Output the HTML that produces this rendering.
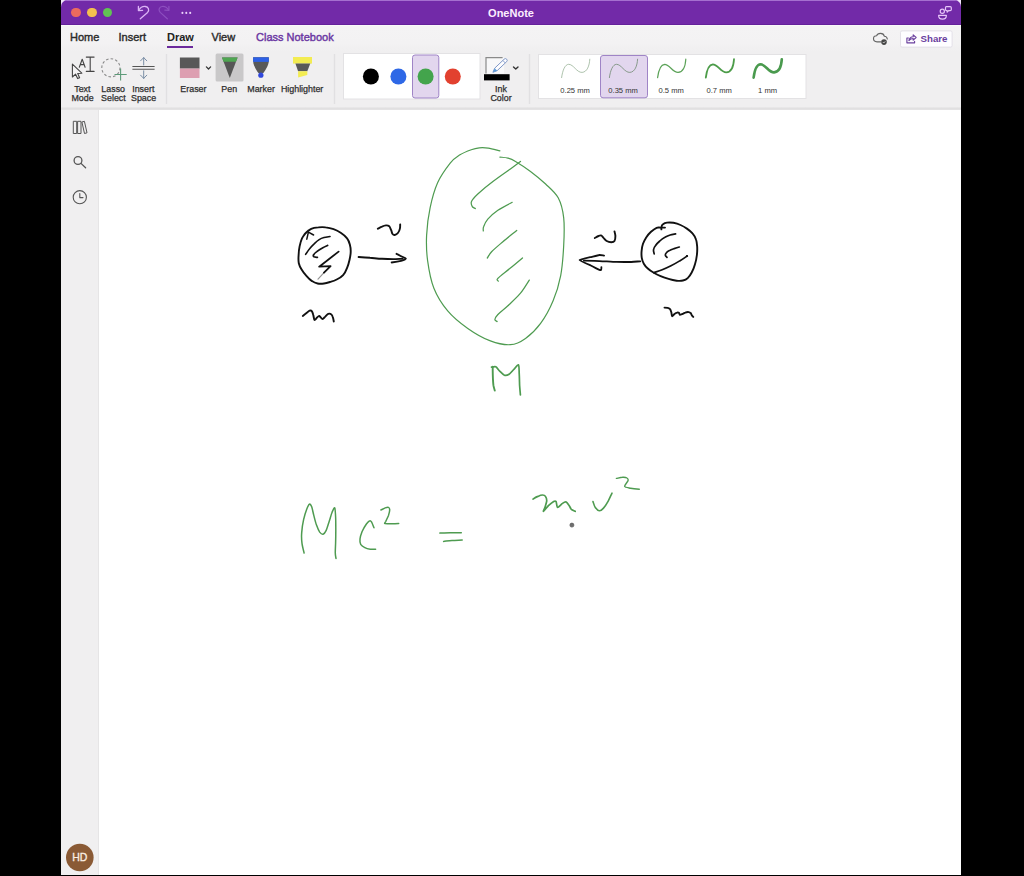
<!DOCTYPE html>
<html><head><meta charset="utf-8"><title>OneNote</title>
<style>
html,body{margin:0;padding:0;background:#000;}
body{width:1024px;height:876px;position:relative;overflow:hidden;font-family:"Liberation Sans",sans-serif;}
#win{position:absolute;left:61px;top:0;width:900px;height:875px;background:#fff;border-radius:6.5px 6.5px 0 0;overflow:hidden;}
#title{position:absolute;left:0;top:0;width:900px;height:25px;background:#722aa8;border-top:1px solid #a56fd0;border-bottom:1px solid #64219a;box-sizing:border-box;}
#title .t{position:absolute;left:0;width:900px;top:6px;text-align:center;color:#fdeeff;font-weight:bold;font-size:11px;line-height:13px;}
.tl{position:absolute;top:6.8px;width:9.6px;height:9.6px;border-radius:50%;}
#tabs{position:absolute;left:0;top:25px;width:900px;height:26px;background:linear-gradient(#fbfafb 0,#f4f3f4 1.5px,#f3f2f3 18px,#f0eff0 26px);}
.tab{position:absolute;top:5px;font-size:11px;line-height:14px;color:#2b2b2b;-webkit-text-stroke:0.4px #2b2b2b;white-space:nowrap;}
#ribbon{position:absolute;left:0;top:51px;width:900px;height:57px;background:#f0eff0;}
#rline{position:absolute;left:0;top:107px;width:900px;height:3px;background:linear-gradient(#ebeaeb,#e0dfe0 55%,#e6e5e6);}
.lbl{position:absolute;font-size:8.5px;line-height:9.7px;color:#2e2e2e;text-align:center;white-space:nowrap;-webkit-text-stroke:0.2px #2e2e2e;transform:translateX(-50%);}
#side{position:absolute;left:0;top:110px;width:38px;height:765px;background:#f0eff0;border-right:1px solid #e6e5e6;box-sizing:border-box;}
#canvas{position:absolute;left:38px;top:110px;width:862px;height:765px;background:#fff;}
svg{position:absolute;left:0;top:0;overflow:visible;}
</style></head>
<body>
<div style="position:absolute;left:61px;top:0;width:900px;height:10px;background:#f1e6fa;"></div>
<div id="win">
  <div id="title">
    <div class="tl" style="left:10.4px;background:#ec6a5e;"></div>
    <div class="tl" style="left:26.1px;background:#f4bf4f;"></div>
    <div class="tl" style="left:41.8px;background:#61c454;"></div>
    <div class="t">OneNote</div>
  </div>
  <div id="tabs">
    <div class="tab" style="left:9px;">Home</div>
    <div class="tab" style="left:57.5px;">Insert</div>
    <div class="tab" style="left:106px;font-weight:bold;-webkit-text-stroke:0;color:#222;">Draw</div>
    <div style="position:absolute;left:106px;top:20.5px;width:26px;height:2px;background:#6b2a9c;"></div>
    <div class="tab" style="left:150.5px;">View</div>
    <div class="tab" style="left:195px;color:#6a36a2;-webkit-text-stroke:0.4px #6a36a2;">Class Notebook</div>
  </div>
  <div id="ribbon"></div>
  <div id="rline"></div>
  <div id="side"></div>
  <div id="canvas"></div>
</div>
<!-- full-page overlay SVG in absolute page coordinates -->
<svg id="ui" width="1024" height="876" viewBox="0 0 1024 876">
<!-- title bar icons -->
<g fill="none" stroke="#dcb4f6" stroke-width="1.3" stroke-linecap="round" stroke-linejoin="round">
  <path d="M138.4 6.4 L138.4 10.6 L142.6 10.3"/>
  <path d="M138.8 10.2 C140.5 7.4 143.2 6.3 145.3 6.5 C148.6 6.9 149.6 10.2 147.6 12.4 L140.3 18.8"/>
</g>
<g fill="none" stroke="#9256c4" stroke-width="1.2" stroke-linecap="round" stroke-linejoin="round" opacity="0.85">
  <path d="M168.9 6.4 L168.9 10.4 L164.8 10.1"/>
  <path d="M168.5 10 C166.9 7.3 164.2 6.3 162.2 6.5 C159 6.9 158.2 10.2 160.2 12.4 L167.3 18.8"/>
</g>
<g fill="#ead2fa"><circle cx="182.4" cy="12.9" r="1.05"/><circle cx="186.3" cy="12.9" r="1.05"/><circle cx="190.2" cy="12.9" r="1.05"/></g>
<!-- feedback icon -->
<g fill="none" stroke="#e6c4f8" stroke-width="1.2" stroke-linejoin="round">
  <circle cx="942.3" cy="11.2" r="2.1"/>
  <path d="M938.6 15.3 H946.4 C946.4 18 944.6 19.2 942.5 19.2 C940.4 19.2 938.6 18 938.6 15.3 Z"/>
  <path d="M946.3 6.6 H950.2 Q951.3 6.6 951.3 7.7 V9.6 Q951.3 10.7 950.2 10.7 H948.6 L947.2 12.2 V10.7 H946.6 Q945.5 10.7 945.5 9.6 V7.7 Q945.5 6.6 946.3 6.6 Z"/>
</g>
<!-- cloud -->
<g fill="none" stroke="#646464" stroke-width="1.15" stroke-linejoin="round" stroke-linecap="round">
  <path d="M880.8 41.8 H877 C874.8 41.8 873.5 40.3 873.5 38.6 C873.5 36.9 874.9 35.7 876.7 35.7 C877.2 34.1 878.8 33.3 880.5 33.3 C882.5 33.3 884 34.6 884.4 36.3 C885.9 36.4 887.1 37.5 887.3 39"/>
</g>
<circle cx="884" cy="42.1" r="2.8" fill="#474747"/>
<path d="M882.8 42 L883.8 43 L885.3 41.3" fill="none" stroke="#e6e6e6" stroke-width="0.75"/>
<!-- share button -->
<rect x="900.5" y="30.9" width="51.6" height="16.2" rx="1.5" fill="#fefdff" stroke="#e3e0e8" stroke-width="1"/>
<g fill="none" stroke="#6a3f9e" stroke-width="1.15" stroke-linejoin="round" stroke-linecap="round">
  <path d="M908.4 38 H906.9 V42.8 H914.6 V41.4"/>
  <path d="M908.9 40.6 C909.3 38.2 910.9 36.9 913.2 36.8 V34.8 L916.1 37.5 L913.2 40.2 V38.5 C911.3 38.5 910 39.2 908.9 40.6 Z"/>
</g>
<text x="920.5" y="42.2" font-family="Liberation Sans, sans-serif" font-weight="bold" font-size="9.7" fill="#6a3f9e">Share</text>

<!-- ribbon separators -->
<g stroke="#e1e0e2" stroke-width="1.4">
  <line x1="166.5" y1="54" x2="166.5" y2="104"/>
  <line x1="334.5" y1="54" x2="334.5" y2="104"/>
  <line x1="529.5" y1="54" x2="529.5" y2="104"/>
</g>

<!-- Text Mode icon -->
<g fill="none" stroke="#444" stroke-width="1.1" stroke-linejoin="round" stroke-linecap="round">
  <path d="M72.4 64.2 L72.4 77 L75.6 74.2 L77.6 78.6 L79.6 77.7 L77.7 73.5 L81.8 73.2 Z" fill="#f4f3f4"/>
  <path d="M79.3 67.2 L82.2 59.3 L85.1 67.2 M80.3 64.6 H84.1"/>
  <path d="M86.3 57.1 H94.1 M86.3 71.4 H94.1 M90.2 57.1 V71.4"/>
</g>
<!-- Lasso -->
<circle cx="110.9" cy="67.8" r="9.1" fill="none" stroke="#8a8a8a" stroke-width="1.1" stroke-dasharray="2.6 2.1"/>
<path d="M120.6 68.4 V80.6 M114.5 74.5 H126.7" fill="none" stroke="#5c9a78" stroke-width="1.1"/>
<!-- Insert Space -->
<g fill="none" stroke="#555" stroke-width="1.1">
  <path d="M132.4 66.5 H154.6 M132.4 69.3 H154.6"/>
</g>
<g fill="none" stroke="#7a8ea6" stroke-width="1" stroke-linecap="round" stroke-linejoin="round">
  <path d="M143.7 57.6 V65 M140.6 60.8 L143.7 57.6 L146.8 60.8"/>
  <path d="M143.7 70.8 V78.4 M140.6 75.2 L143.7 78.4 L146.8 75.2"/>
</g>

<!-- Eraser -->
<rect x="179.9" y="57.5" width="19.6" height="11.1" fill="#585858"/>
<rect x="179.9" y="68.6" width="19.6" height="9.4" fill="#dd9fb1"/>
<path d="M206.4 66.9 L208.5 69 L210.6 66.9" fill="none" stroke="#333" stroke-width="1.3" stroke-linecap="round" stroke-linejoin="round"/>
<!-- Pen selected bg -->
<rect x="215.6" y="53.6" width="27.9" height="27.9" rx="1.5" fill="#c9c8c9"/>
<path d="M222 57.5 H237.6 L229.8 78 Z" fill="#565656"/>
<path d="M222 57.5 H237.6 L236 61.7 H223.6 Z" fill="#4ea651"/>
<!-- Marker -->
<path d="M253.1 57.3 H268.8 V61 C268.6 65.5 265.5 70 263.4 73 H258.4 C256.3 70 253.3 65.5 253.1 61 Z" fill="#595959"/>
<path d="M253.1 57.3 H268.8 V61.9 H253.1 Z" fill="#2d60e6"/>
<circle cx="260.85" cy="75.2" r="2.6" fill="#3148dc"/>
<!-- Highlighter -->
<path d="M293 57 H312 V63.6 H293 Z" fill="#f3ec52"/>
<path d="M295.4 63.6 H310.3 L307.3 71.3 H298.1 Z" fill="#595959"/>
<path d="M298.1 71.3 H307.3 V74.9 L298.1 77.5 Z" fill="#f3ec52"/>

<!-- colour palette -->
<rect x="343.5" y="53.5" width="136.5" height="45.5" fill="#fff" stroke="#e3e2e4" stroke-width="1"/>
<rect x="412.5" y="55" width="26.3" height="43" rx="2.5" fill="#e2d6ee" stroke="#9f84c6" stroke-width="1"/>
<circle cx="370.9" cy="76.5" r="8" fill="#000"/>
<circle cx="398.4" cy="76.5" r="8" fill="#2e68e6"/>
<circle cx="425.6" cy="76.5" r="8" fill="#43a44c"/>
<circle cx="452.8" cy="76.5" r="8" fill="#e2412f"/>
<!-- Ink color -->
<rect x="486" y="57.7" width="18" height="16" fill="#f8f8f9"/><path d="M486 73.4 V57.7 H502.6" fill="none" stroke="#8a8a8a" stroke-width="1.2"/>
<g transform="translate(492.9 72.3) rotate(-43.5)">
  <path d="M0 0 L4.2 -1.75 H17.2 Q19 -1.75 19 0 Q19 1.75 17.2 1.75 H4.2 Z" fill="#fdfdff" stroke="#7b93c4" stroke-width="0.9" stroke-linejoin="round"/>
  <path d="M0 0 L4.2 -1.75 V1.75 Z" fill="#5b9bd8"/>
  <path d="M15.4 -1.75 V1.75" stroke="#7b93c4" stroke-width="0.8"/>
</g>
<rect x="484" y="74.2" width="25.6" height="6.2" fill="#000"/>
<path d="M513.5 66.9 L515.75 69 L518 66.9" fill="none" stroke="#333" stroke-width="1.4" stroke-linecap="round" stroke-linejoin="round"/>

<!-- thickness palette -->
<rect x="538.5" y="54.5" width="267.5" height="44" fill="#fff" stroke="#e3e2e4" stroke-width="1"/>
<rect x="600.5" y="55.5" width="47" height="42.3" rx="2.5" fill="#e2d6ee" stroke="#9f84c6" stroke-width="1"/>
<path d="M561.6 77.6 C562.6 70 565.1 64.5 568.6 64.3 C573.6 64.3 576.6 72.6 582.1 72.4 C587.1 72 589.4 66 589.8000000000001 59.2" fill="none" stroke="#8aa888" stroke-width="0.7" stroke-linecap="round" opacity="1"/>
<path d="M609.4 77.6 C610.4 70 612.9 64.5 616.4 64.3 C621.4 64.3 624.4 72.6 629.9 72.4 C634.9 72 637.1999999999999 66 637.6 59.2" fill="none" stroke="#7d927f" stroke-width="0.9" stroke-linecap="round" opacity="1"/>
<path d="M657.6 77.6 C658.6 70 661.1 64.5 664.6 64.3 C669.6 64.3 672.6 72.6 678.1 72.4 C683.1 72 685.4 66 685.8000000000001 59.2" fill="none" stroke="#5ba257" stroke-width="1.2" stroke-linecap="round" opacity="1"/>
<path d="M705.8 77.6 C706.8 70 709.3 64.5 712.8 64.3 C717.8 64.3 720.8 72.6 726.3 72.4 C731.3 72 733.5999999999999 66 734.0 59.2" fill="none" stroke="#4c9c49" stroke-width="1.8" stroke-linecap="round" opacity="1"/>
<path d="M753.6 77.6 C754.6 70 757.1 64.5 760.6 64.3 C765.6 64.3 768.6 72.6 774.1 72.4 C779.1 72 781.4 66 781.8000000000001 59.2" fill="none" stroke="#4a9a4e" stroke-width="2.6" stroke-linecap="round" opacity="1"/>
<text x="82.4" y="91.5" font-family="Liberation Sans, sans-serif" font-size="8.9" fill="#2e2e2e" text-anchor="middle" stroke="#2e2e2e" stroke-width="0.25">Text</text>
<text x="82.5" y="101.2" font-family="Liberation Sans, sans-serif" font-size="8.9" fill="#2e2e2e" text-anchor="middle" stroke="#2e2e2e" stroke-width="0.25">Mode</text>
<text x="113.2" y="91.5" font-family="Liberation Sans, sans-serif" font-size="8.9" fill="#2e2e2e" text-anchor="middle" stroke="#2e2e2e" stroke-width="0.25">Lasso</text>
<text x="113.4" y="101.2" font-family="Liberation Sans, sans-serif" font-size="8.9" fill="#2e2e2e" text-anchor="middle" stroke="#2e2e2e" stroke-width="0.25">Select</text>
<text x="143.3" y="91.5" font-family="Liberation Sans, sans-serif" font-size="8.9" fill="#2e2e2e" text-anchor="middle" stroke="#2e2e2e" stroke-width="0.25">Insert</text>
<text x="143.6" y="101.2" font-family="Liberation Sans, sans-serif" font-size="8.9" fill="#2e2e2e" text-anchor="middle" stroke="#2e2e2e" stroke-width="0.25">Space</text>
<text x="193.4" y="91.5" font-family="Liberation Sans, sans-serif" font-size="8.9" fill="#2e2e2e" text-anchor="middle" stroke="#2e2e2e" stroke-width="0.25">Eraser</text>
<text x="229.2" y="91.5" font-family="Liberation Sans, sans-serif" font-size="8.9" fill="#2e2e2e" text-anchor="middle" stroke="#2e2e2e" stroke-width="0.25">Pen</text>
<text x="261.1" y="91.5" font-family="Liberation Sans, sans-serif" font-size="8.9" fill="#2e2e2e" text-anchor="middle" stroke="#2e2e2e" stroke-width="0.25">Marker</text>
<text x="302.1" y="91.5" font-family="Liberation Sans, sans-serif" font-size="8.9" fill="#2e2e2e" text-anchor="middle" stroke="#2e2e2e" stroke-width="0.25">Highlighter</text>
<text x="501" y="91.5" font-family="Liberation Sans, sans-serif" font-size="8.9" fill="#2e2e2e" text-anchor="middle" stroke="#2e2e2e" stroke-width="0.25">Ink</text>
<text x="501" y="101.3" font-family="Liberation Sans, sans-serif" font-size="8.9" fill="#2e2e2e" text-anchor="middle" stroke="#2e2e2e" stroke-width="0.25">Color</text>
<text x="575.1" y="92.9" font-family="Liberation Sans, sans-serif" font-size="7.6" fill="#333" text-anchor="middle" >0.25 mm</text>
<text x="623.1" y="92.9" font-family="Liberation Sans, sans-serif" font-size="7.6" fill="#333" text-anchor="middle" >0.35 mm</text>
<text x="671.2" y="92.9" font-family="Liberation Sans, sans-serif" font-size="7.6" fill="#333" text-anchor="middle" >0.5 mm</text>
<text x="719.2" y="92.9" font-family="Liberation Sans, sans-serif" font-size="7.6" fill="#333" text-anchor="middle" >0.7 mm</text>
<text x="767.6" y="92.9" font-family="Liberation Sans, sans-serif" font-size="7.6" fill="#333" text-anchor="middle" >1 mm</text>

<g fill="none" stroke="#555" stroke-width="1" stroke-linejoin="round">
  <rect x="73.3" y="121.3" width="3.4" height="12.2"/>
  <rect x="77.6" y="121.3" width="3.4" height="12.2"/>
  <path d="M81.9 122 L84.4 121.3 L87 132.8 L84.5 133.5 Z"/>
</g>
<g fill="none" stroke="#555" stroke-width="1.3" stroke-linecap="round">
  <circle cx="78" cy="160.5" r="3.9"/>
  <path d="M81 163.4 L85.6 167.7"/>
</g>
<g fill="none" stroke="#555" stroke-width="1.1" stroke-linecap="round" stroke-linejoin="round">
  <circle cx="79.8" cy="197.2" r="6.6"/>
  <path d="M79.8 193.6 V197.6 H83"/>
</g>
<circle cx="79.8" cy="857.5" r="13.8" fill="#8a5a35"/>
<text x="79.8" y="861.3" font-family="Liberation Sans, sans-serif" font-size="10.5" fill="#fbeee2" text-anchor="middle" stroke="#fbeee2" stroke-width="0.3">HD</text>
</svg>
<svg id="ink" width="1024" height="876" viewBox="0 0 1024 876">
<path d="M499.9 150.8 C498.0 150.4 491.8 148.6 488.3 148.1 C484.9 147.6 482.2 147.5 479.3 147.8 C476.5 148.1 474.5 148.5 471.3 149.7 C468.0 150.9 463.5 152.6 460.0 154.8 C456.5 157.1 453.9 158.5 450.2 163.1 C446.5 167.8 441.0 175.3 437.6 182.7 C434.3 190.2 431.9 199.0 430.1 207.8 C428.2 216.6 427.0 226.7 426.6 235.4 C426.2 244.2 426.4 251.8 427.6 260.6 C428.8 269.3 430.5 279.8 433.9 288.2 C437.2 296.5 442.0 304.1 447.7 310.8 C453.3 317.5 460.6 323.3 467.8 328.4 C474.9 333.4 483.2 338.2 490.4 340.9 C497.5 343.6 504.6 345.1 510.4 344.7 C516.3 344.3 520.5 342.0 525.5 338.4 C530.5 334.8 536.0 329.6 540.6 323.3 C545.2 317.1 549.8 308.7 553.1 300.7 C556.5 292.8 558.9 284.8 560.7 275.6 C562.4 266.4 563.2 255.1 563.7 245.5 C564.2 235.9 564.6 225.8 563.7 217.9 C562.8 209.9 561.2 203.4 558.2 197.8 C555.1 192.1 550.2 188.4 545.6 184.0 C541.0 179.6 535.6 175.2 530.5 171.4 C525.5 167.6 519.2 163.6 515.5 161.4 C511.7 159.1 510.5 158.8 507.9 158.1 C505.3 157.4 501.2 157.3 499.9 157.1" fill="none" stroke="#4e9b50" stroke-width="1.2" stroke-linecap="round" stroke-linejoin="round"/>
<path d="M520.5 161.4 C518.8 162.6 515.0 165.6 510.4 168.9 C505.8 172.2 498.3 177.3 492.9 181.5 C487.4 185.6 481.4 190.7 477.8 194.0 C474.2 197.4 472.4 199.5 471.5 201.5 C470.6 203.6 471.6 205.4 472.3 206.6 C472.9 207.7 474.8 208.2 475.3 208.6" fill="none" stroke="#4e9b50" stroke-width="1.25" stroke-linecap="round" stroke-linejoin="round"/>
<path d="M512.2 202.3 C509.8 203.6 501.9 207.5 497.9 210.3 C493.8 213.1 490.2 216.4 487.8 219.1 C485.5 221.8 484.3 224.7 483.6 226.7 C482.8 228.6 483.4 230.2 483.3 230.9" fill="none" stroke="#4e9b50" stroke-width="1.25" stroke-linecap="round" stroke-linejoin="round"/>
<path d="M516.7 230.4 C514.4 232.3 507.1 238.2 502.9 241.7 C498.7 245.3 494.2 249.0 491.6 251.8 C489.0 254.5 488.1 257.0 487.3 258.0" fill="none" stroke="#4e9b50" stroke-width="1.25" stroke-linecap="round" stroke-linejoin="round"/>
<path d="M522.5 258.0 C520.5 259.7 514.1 265.1 510.4 268.1 C506.8 271.1 502.6 274.2 500.4 276.1 C498.2 278.0 497.5 278.5 497.1 279.4 C496.8 280.2 498.2 280.9 498.4 281.1" fill="none" stroke="#4e9b50" stroke-width="1.25" stroke-linecap="round" stroke-linejoin="round"/>
<path d="M529.3 280.1 C527.8 282.3 524.0 288.9 520.5 293.2 C516.9 297.5 511.7 302.2 507.9 305.8 C504.2 309.3 500.1 312.2 497.9 314.5 C495.7 316.8 495.0 318.4 494.9 319.6 C494.7 320.7 496.8 321.2 497.1 321.6" fill="none" stroke="#4e9b50" stroke-width="1.25" stroke-linecap="round" stroke-linejoin="round"/>
<path d="M304.0 235.2 C304.3 234.8 304.8 233.9 306.0 232.8 C307.2 231.7 309.1 229.7 311.2 228.8 C313.2 227.9 316.0 227.6 318.4 227.4 C320.8 227.1 323.0 227.0 325.6 227.4 C328.1 227.7 331.0 228.3 333.6 229.2 C336.1 230.1 338.5 231.3 340.7 232.8 C343.0 234.3 345.6 236.4 347.1 238.4 C348.7 240.4 349.3 242.5 349.9 244.8 C350.5 247.0 350.8 249.4 350.7 252.0 C350.7 254.5 350.1 257.3 349.5 260.0 C348.9 262.6 348.2 265.4 347.1 267.9 C346.1 270.5 344.9 273.2 343.1 275.1 C341.4 277.1 338.9 278.4 336.7 279.5 C334.6 280.7 332.5 281.3 330.4 281.9 C328.2 282.6 326.1 283.3 324.0 283.5 C321.8 283.8 319.6 283.9 317.6 283.5 C315.6 283.1 313.8 282.4 312.0 281.1 C310.1 279.9 308.1 277.9 306.4 275.9 C304.7 274.0 302.9 271.7 301.6 269.5 C300.3 267.4 299.3 265.5 298.8 263.2 C298.3 260.8 298.4 258.0 298.6 255.2 C298.7 252.4 299.0 249.2 299.6 246.4 C300.2 243.6 300.9 240.6 302.0 238.4 C303.1 236.1 304.9 234.1 306.0 232.8 C307.0 231.5 308.0 230.9 308.4 230.5" fill="none" stroke="#111" stroke-width="1.9" stroke-linecap="round" stroke-linejoin="round"/>
<path d="M306.8 239.2 L308.4 232.2 L313.6 235.0" fill="none" stroke="#111" stroke-width="1.5" stroke-linecap="round" stroke-linejoin="round"/>
<path d="M330.0 236.5 C329.0 236.7 325.8 237.1 324.0 237.6 C322.2 238.1 320.8 238.6 319.2 239.6 C317.6 240.6 316.0 242.0 314.4 243.6 C312.8 245.1 311.0 247.0 309.6 248.8 C308.1 250.6 306.3 253.4 305.6 254.4" fill="none" stroke="#111" stroke-width="1.6" stroke-linecap="round" stroke-linejoin="round"/>
<path d="M327.6 245.4 C326.7 245.8 324.2 246.9 322.4 248.0 C320.6 249.0 318.2 250.4 316.8 251.6 C315.3 252.7 314.0 253.9 313.6 254.8 C313.1 255.6 313.3 256.3 314.0 256.8 C314.6 257.2 316.8 257.3 317.4 257.4" fill="none" stroke="#111" stroke-width="1.7" stroke-linecap="round" stroke-linejoin="round"/>
<path d="M338.6 251.6 L319.2 266.7 L330.6 266.2 L324.0 272.7" fill="none" stroke="#111" stroke-width="1.8" stroke-linecap="round" stroke-linejoin="round"/>
<path d="M324.0 272.7 L318.0 279.1" fill="none" stroke="#111" stroke-width="1.2" stroke-linecap="round" stroke-linejoin="round" opacity="0.45"/>
<path d="M377.8 228.7 C378.5 228.4 380.6 227.1 382.0 226.6 C383.3 226.0 384.8 225.5 386.0 225.4 C387.2 225.3 388.3 225.4 389.2 226.2 C390.0 227.0 390.6 228.9 391.2 230.2 C391.7 231.4 391.8 233.0 392.4 233.8 C393.0 234.6 393.8 235.1 394.7 235.0 C395.7 234.8 397.1 234.0 397.9 233.0 C398.8 231.9 399.6 230.0 399.9 228.6 C400.3 227.2 400.1 225.1 400.2 224.4" fill="none" stroke="#111" stroke-width="1.9" stroke-linecap="round" stroke-linejoin="round"/>
<path d="M358.6 257.0 C360.5 257.1 366.1 257.4 370.0 257.8 C373.9 258.1 378.1 258.6 382.0 258.8 C385.8 259.0 389.7 259.1 393.2 259.1 C396.6 259.1 401.1 258.8 402.7 258.8" fill="none" stroke="#111" stroke-width="1.9" stroke-linecap="round" stroke-linejoin="round"/>
<path d="M396.5 253.8 C397.0 254.0 400.2 255.7 401.1 256.2 C402.1 256.6 405.9 258.1 405.9 258.6 C405.9 259.0 402.6 260.5 401.1 260.9 C399.7 261.3 392.5 262.4 391.6 262.5" fill="none" stroke="#111" stroke-width="1.8" stroke-linecap="round" stroke-linejoin="round"/>
<path d="M302.8 315.9 C303.3 315.5 305.3 313.9 306.2 313.2 C307.1 312.5 308.9 311.0 309.6 310.7 C310.4 310.5 311.4 310.6 311.8 311.2 C312.3 311.8 313.0 314.0 313.3 315.1 C313.7 316.3 314.0 319.7 314.5 320.0 C315.0 320.3 316.4 318.1 317.0 317.6 C317.6 317.0 318.6 315.9 319.2 315.9 C319.7 315.9 320.4 317.2 320.9 317.6 C321.3 318.0 322.0 319.2 322.6 319.0 C323.2 318.9 324.5 317.3 325.3 316.6 C326.0 315.9 327.4 314.2 328.2 313.9 C329.0 313.6 330.5 313.7 331.1 314.2 C331.8 314.6 332.5 316.1 332.8 317.1 C333.2 318.1 333.7 320.9 333.8 321.5" fill="none" stroke="#111" stroke-width="1.9" stroke-linecap="round" stroke-linejoin="round"/>
<path d="M665.0 227.6 C664.2 227.6 662.0 227.6 660.6 227.6 C659.2 227.7 658.2 227.1 656.6 227.8 C655.0 228.5 652.7 230.2 651.0 231.8 C649.3 233.4 647.5 235.4 646.2 237.4 C644.9 239.4 643.8 241.5 643.0 243.8 C642.2 246.0 641.8 248.6 641.6 251.0 C641.4 253.4 641.4 256.0 641.8 258.2 C642.2 260.3 642.8 262.0 643.8 263.7 C644.8 265.5 646.2 267.1 647.8 268.5 C649.4 270.0 651.2 271.3 653.4 272.5 C655.5 273.8 658.0 275.1 660.6 276.1 C663.1 277.2 665.9 278.2 668.6 278.9 C671.2 279.7 674.2 280.4 676.6 280.7 C678.9 281.0 681.1 281.0 682.9 280.5 C684.8 280.1 686.3 279.5 687.7 278.1 C689.2 276.8 690.5 274.8 691.7 272.5 C692.9 270.3 694.1 267.5 694.9 264.5 C695.8 261.6 696.6 257.9 696.9 255.0 C697.3 252.0 697.3 249.5 697.2 247.0 C697.0 244.4 696.9 242.0 696.1 239.8 C695.4 237.5 694.1 235.2 692.5 233.4 C691.0 231.5 688.9 230.0 686.9 228.6 C684.9 227.2 682.8 226.0 680.5 225.0 C678.3 224.0 675.6 223.2 673.4 222.8 C671.1 222.4 668.7 222.4 667.0 222.6 C665.2 222.8 663.9 223.5 663.0 224.2 C662.0 224.9 661.6 226.1 661.4 227.0 C661.1 227.9 661.4 229.0 661.4 229.4" fill="none" stroke="#111" stroke-width="1.9" stroke-linecap="round" stroke-linejoin="round"/>
<path d="M675.6 233.9 C674.7 234.1 671.9 234.5 670.2 235.0 C668.5 235.5 667.1 236.0 665.4 237.0 C663.6 238.0 661.4 239.5 659.8 241.0 C658.1 242.4 656.4 244.3 655.4 245.8 C654.3 247.2 653.7 248.4 653.5 249.8 C653.3 251.1 654.1 253.1 654.2 253.8" fill="none" stroke="#111" stroke-width="1.7" stroke-linecap="round" stroke-linejoin="round"/>
<path d="M679.3 247.0 C678.5 247.2 675.8 248.0 674.2 248.6 C672.5 249.2 670.7 249.8 669.4 250.6 C668.0 251.3 666.8 252.2 666.2 253.0 C665.5 253.8 665.2 254.6 665.4 255.4 C665.5 256.1 666.7 257.0 667.0 257.4" fill="none" stroke="#111" stroke-width="1.7" stroke-linecap="round" stroke-linejoin="round"/>
<path d="M687.3 255.9 C686.1 256.8 682.5 259.3 679.7 260.9 C677.0 262.6 673.9 264.3 671.0 265.7 C668.0 267.2 665.0 268.6 662.2 269.7 C659.3 270.9 655.2 272.2 653.8 272.7" fill="none" stroke="#111" stroke-width="1.7" stroke-linecap="round" stroke-linejoin="round"/>
<circle cx="686.9" cy="256.1" r="1.1" fill="#111"/>
<path d="M640.3 261.3 C638.1 261.4 631.3 262.0 626.8 262.0 C622.3 262.1 617.7 261.9 613.1 261.8 C608.5 261.6 604.3 261.3 599.4 261.1 C594.5 260.9 586.5 260.7 583.9 260.7" fill="none" stroke="#111" stroke-width="1.8" stroke-linecap="round" stroke-linejoin="round"/>
<path d="M604.1 255.6 C603.8 255.6 600.3 254.9 599.4 255.0 C598.5 255.1 591.6 256.9 590.3 257.2 C588.9 257.5 579.5 259.5 579.5 260.0 C579.5 260.6 588.9 264.6 590.3 265.2 C591.6 265.9 598.7 269.5 599.4 269.8 C600.1 270.1 601.1 270.0 601.2 269.8 C601.4 269.6 601.4 267.2 601.4 267.1" fill="none" stroke="#111" stroke-width="1.8" stroke-linecap="round" stroke-linejoin="round"/>
<path d="M594.8 238.0 C595.4 237.7 597.4 236.4 598.5 236.0 C599.5 235.6 600.4 235.2 601.2 235.5 C602.1 235.9 602.6 236.9 603.5 237.8 C604.4 238.7 605.4 240.3 606.7 241.0 C608.0 241.8 610.0 242.2 611.3 242.2 C612.6 242.2 613.8 242.1 614.5 241.0 C615.2 240.0 615.4 237.6 615.4 236.0 C615.4 234.4 614.6 232.2 614.5 231.4" fill="none" stroke="#111" stroke-width="1.9" stroke-linecap="round" stroke-linejoin="round"/>
<path d="M664.5 307.6 C664.9 307.6 666.9 307.7 667.7 307.9 C668.4 308.1 669.6 308.5 670.1 309.2 C670.6 309.8 671.1 311.6 671.4 312.6 C671.6 313.5 671.7 316.0 672.1 316.2 C672.5 316.4 673.9 314.5 674.5 314.0 C675.2 313.6 676.4 312.7 677.0 312.6 C677.6 312.4 678.5 312.5 678.9 312.8 C679.3 313.1 679.4 314.6 679.9 314.8 C680.4 314.9 681.6 314.3 682.3 314.0 C683.1 313.8 684.4 312.8 685.3 312.6 C686.1 312.3 688.0 312.0 688.7 312.1 C689.4 312.2 690.2 312.6 690.6 313.1 C691.1 313.5 691.5 315.0 691.9 315.5 C692.2 316.0 693.1 316.7 693.3 316.9" fill="none" stroke="#111" stroke-width="1.9" stroke-linecap="round" stroke-linejoin="round"/>
<path d="M494.8 390.6 C494.6 389.7 493.8 387.8 493.4 385.2 C493.1 382.6 492.9 378.1 492.8 375.0 C492.7 371.9 492.7 368.2 492.7 366.8" fill="none" stroke="#4e9b50" stroke-width="1.9" stroke-linecap="round" stroke-linejoin="round"/>
<path d="M491.5 367.2 C492.1 367.1 494.7 366.3 495.8 366.8 C496.9 367.3 498.5 370.0 499.7 371.1 C500.8 372.2 503.1 374.7 504.4 375.2 C505.6 375.6 507.8 375.0 509.1 374.2 C510.3 373.5 512.5 370.8 513.8 369.5 C515.0 368.3 517.7 364.3 518.4 364.8 C519.2 365.4 519.1 370.7 519.2 373.4 C519.4 376.1 519.5 382.3 519.6 385.2 C519.8 388.0 520.3 393.6 520.4 394.9" fill="none" stroke="#4e9b50" stroke-width="1.7" stroke-linecap="round" stroke-linejoin="round"/>
<path d="M304.1 553.0 C303.8 551.6 302.4 546.4 302.0 543.3 C301.6 540.3 301.4 536.1 301.7 532.6 C301.9 529.1 302.8 523.3 303.6 519.7 C304.4 516.2 305.9 511.3 306.8 509.0 C307.7 506.6 308.8 504.5 309.5 504.1 C310.2 503.8 311.0 505.1 311.7 506.8 C312.3 508.5 313.1 512.7 313.8 515.4 C314.5 518.1 315.6 522.6 316.5 525.1 C317.4 527.6 318.7 530.7 319.7 532.1 C320.7 533.4 322.2 534.5 323.1 534.2 C324.1 534.0 325.2 532.5 326.2 530.4 C327.1 528.4 328.5 523.5 329.4 520.8 C330.3 518.0 331.3 514.1 332.1 512.2 C332.9 510.3 334.2 507.2 334.7 507.9 C335.3 508.5 335.4 513.1 335.6 516.5 C335.8 519.9 335.8 526.4 335.8 530.4 C335.8 534.5 335.7 540.0 335.6 543.3 C335.5 546.7 335.2 550.8 335.3 553.0 C335.3 555.3 335.9 557.6 336.0 558.4" fill="none" stroke="#4e9b50" stroke-width="1.5" stroke-linecap="round" stroke-linejoin="round"/>
<path d="M374.0 527.8 C373.6 526.9 372.1 522.9 371.5 521.9 C370.8 520.8 370.4 520.5 369.7 520.8 C368.9 521.1 367.6 522.4 366.4 524.0 C365.3 525.6 363.1 529.3 362.1 531.5 C361.2 533.8 360.2 537.1 360.0 539.0 C359.8 541.0 360.0 543.1 360.7 544.4 C361.5 545.7 363.4 546.9 364.8 547.6 C366.2 548.4 368.6 549.0 370.2 549.2 C371.8 549.5 374.8 549.2 375.6 549.2" fill="none" stroke="#4e9b50" stroke-width="1.5" stroke-linecap="round" stroke-linejoin="round"/>
<path d="M380.9 510.0 C381.4 509.8 384.4 508.2 385.2 507.9 C386.1 507.6 387.9 507.1 388.5 507.4 C389.0 507.6 389.7 509.1 389.7 510.0 C389.7 511.0 388.9 514.1 388.5 515.4 C388.0 516.7 386.2 520.4 385.8 521.3 C385.3 522.3 384.3 523.2 384.7 523.5 C385.1 523.8 387.9 523.8 389.5 523.8 C391.2 523.8 397.6 523.5 398.7 523.5" fill="none" stroke="#4e9b50" stroke-width="1.5" stroke-linecap="round" stroke-linejoin="round"/>
<path d="M439.9 533.1 C441.6 533.0 446.6 532.8 450.1 532.7 C453.7 532.7 459.4 532.7 461.3 532.7" fill="none" stroke="#4e9b50" stroke-width="1.5" stroke-linecap="round" stroke-linejoin="round"/>
<path d="M443.6 541.4 C445.0 541.3 448.9 540.7 452.0 540.5 C455.1 540.3 460.5 540.2 462.2 540.1" fill="none" stroke="#4e9b50" stroke-width="1.5" stroke-linecap="round" stroke-linejoin="round"/>
<path d="M533.0 499.1 C533.6 498.7 536.6 496.9 537.9 496.4 C539.2 495.8 541.6 495.0 542.6 495.0 C543.6 495.0 545.0 495.6 545.5 496.4 C546.1 497.2 546.8 499.6 546.7 501.1 C546.6 502.5 545.3 506.1 544.9 507.5 C544.5 508.9 543.0 511.5 543.5 511.3 C544.0 511.0 547.1 507.1 548.4 505.7 C549.8 504.4 552.7 502.0 553.7 501.4 C554.7 500.9 555.5 500.8 556.1 501.6 C556.6 502.5 556.7 507.3 557.6 507.5 C558.4 507.7 561.4 504.1 562.5 503.4 C563.6 502.6 565.2 501.6 566.0 501.9 C566.9 502.1 568.2 504.2 568.9 505.2 C569.7 506.1 570.5 508.4 571.3 509.3 C572.1 510.1 574.6 511.0 575.2 511.3" fill="none" stroke="#4e9b50" stroke-width="1.7" stroke-linecap="round" stroke-linejoin="round"/>
<path d="M593.0 501.6 C593.4 502.6 594.2 506.0 595.3 507.5 C596.4 509.0 598.0 510.7 599.4 510.8 C600.8 510.9 602.1 509.7 603.5 508.1 C605.0 506.5 606.8 503.6 608.2 501.1 C609.6 498.6 611.3 494.4 612.0 493.1" fill="none" stroke="#4e9b50" stroke-width="1.6" stroke-linecap="round" stroke-linejoin="round"/>
<path d="M616.4 478.4 C617.2 478.3 620.9 477.3 622.3 477.3 C623.7 477.2 626.2 477.5 627.0 478.0 C627.7 478.4 628.4 479.4 628.1 480.5 C627.8 481.7 624.3 485.4 624.6 486.4 C624.9 487.4 628.5 487.8 630.5 488.2 C632.4 488.6 638.1 489.2 639.3 489.3" fill="none" stroke="#4e9b50" stroke-width="1.4" stroke-linecap="round" stroke-linejoin="round"/>
<circle cx="571.9" cy="525.1" r="2" fill="#6e6e6e" stroke="#555" stroke-width="0.7"/>
</svg>
</body></html>
